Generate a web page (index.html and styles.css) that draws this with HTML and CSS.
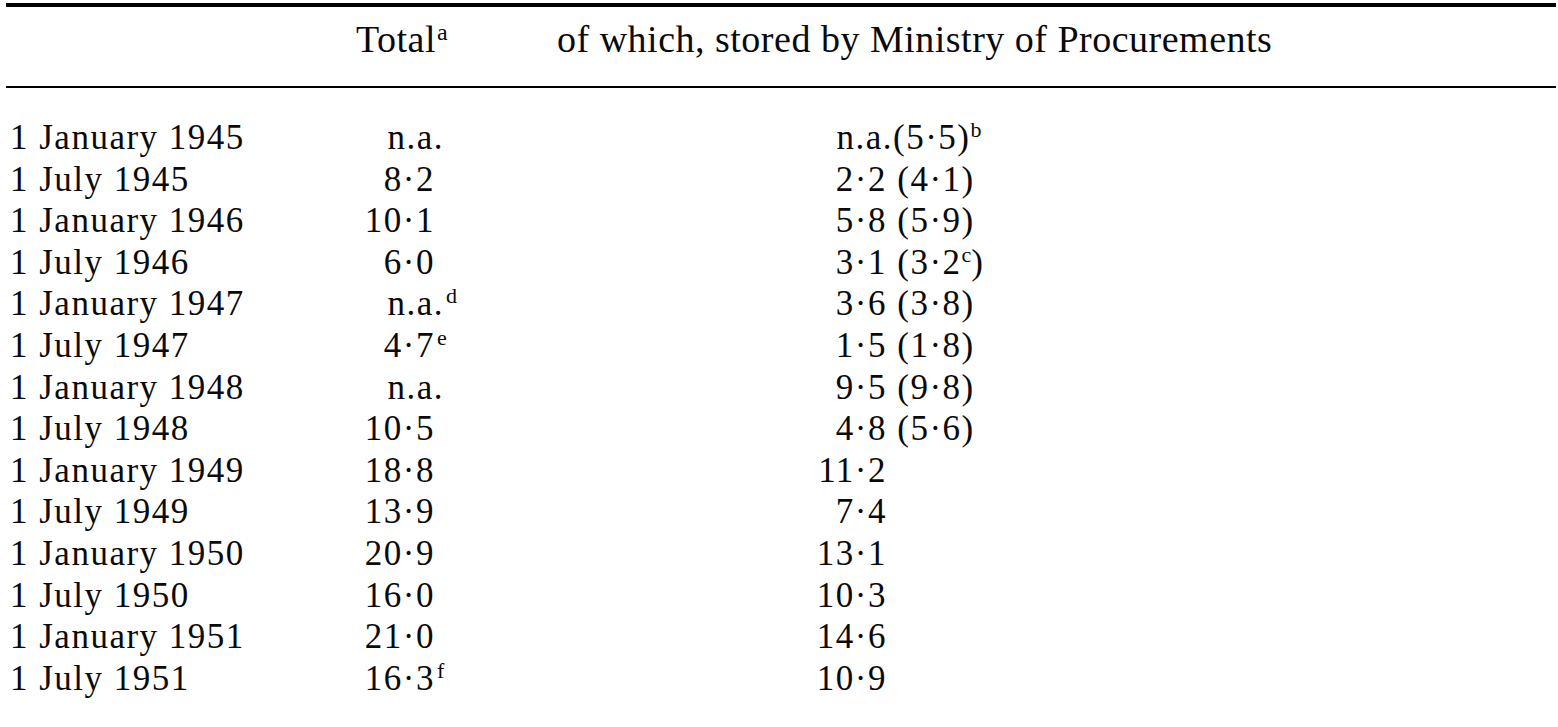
FILE: index.html
```html
<!DOCTYPE html>
<html lang="en">
<head>
<meta charset="utf-8">
<title>Stocks</title>
<link rel="stylesheet" href="styles.css">
</head>
<body>
<div class="table">
  <div class="rule-thick"></div>
  <div class="head">
    <div></div>
    <div class="h-total">Total<sup class="hsup">a</sup></div>
    <div class="h-stored">of which, stored by Ministry of Procurements</div>
  </div>
  <div class="rule-thin"></div>
  <div class="rows">
    <div class="row"><div class="date">1 January 1945</div><div class="tot"><span class="na">n.a.</span></div><div class="sto"><span class="na2">n.a.</span></div><div class="paren after-na">(5·5)<sup class="sup">b</sup></div></div>
    <div class="row"><div class="date">1 July 1945</div><div class="tot">8·2</div><div class="sto">2·2</div><div class="paren"> (4·1)</div></div>
    <div class="row"><div class="date">1 January 1946</div><div class="tot">10·1</div><div class="sto">5·8</div><div class="paren"> (5·9)</div></div>
    <div class="row"><div class="date">1 July 1946</div><div class="tot">6·0</div><div class="sto">3·1</div><div class="paren"> (3·2<sup class="sup">c</sup>)</div></div>
    <div class="row"><div class="date">1 January 1947</div><div class="tot"><span class="na">n.a.</span><span class="fn">d</span></div><div class="sto">3·6</div><div class="paren"> (3·8)</div></div>
    <div class="row"><div class="date">1 July 1947</div><div class="tot">4·7<span class="fn">e</span></div><div class="sto">1·5</div><div class="paren"> (1·8)</div></div>
    <div class="row"><div class="date">1 January 1948</div><div class="tot"><span class="na">n.a.</span></div><div class="sto">9·5</div><div class="paren"> (9·8)</div></div>
    <div class="row"><div class="date">1 July 1948</div><div class="tot">10·5</div><div class="sto">4·8</div><div class="paren"> (5·6)</div></div>
    <div class="row"><div class="date">1 January 1949</div><div class="tot">18·8</div><div class="sto">11·2</div><div class="paren"></div></div>
    <div class="row"><div class="date">1 July 1949</div><div class="tot">13·9</div><div class="sto">7·4</div><div class="paren"></div></div>
    <div class="row"><div class="date">1 January 1950</div><div class="tot">20·9</div><div class="sto">13·1</div><div class="paren"></div></div>
    <div class="row"><div class="date">1 July 1950</div><div class="tot">16·0</div><div class="sto">10·3</div><div class="paren"></div></div>
    <div class="row"><div class="date">1 January 1951</div><div class="tot">21·0</div><div class="sto">14·6</div><div class="paren"></div></div>
    <div class="row"><div class="date">1 July 1951</div><div class="tot">16·3<span class="fn">f</span></div><div class="sto">10·9</div><div class="paren"></div></div>
  </div>
</div>
</body>
</html>
```

FILE: styles.css
```css
html, body {
  margin: 0;
  padding: 0;
  background: #ffffff;
}

body {
  color: #0a0a0a;
  font-family: "Liberation Serif", "Times New Roman", serif;
}

.table {
  margin-left: 6px;
  width: 1550px;
  padding-top: 3px;
}

.rule-thick {
  height: 4px;
  background: #000000;
}

.head {
  display: grid;
  grid-template-columns: 350px 201px 1fr;
  font-size: 38px;
  line-height: 42px;
  letter-spacing: 0.5px;
  padding-top: 11px;
  height: 68px;
}

.hsup {
  font-size: 24px;
  line-height: 0;
  vertical-align: 12px;
  margin-left: 1px;
  letter-spacing: 0;
}

.rule-thin {
  height: 2px;
  background: #000000;
}

.rows {
  padding-top: 29px;
  padding-left: 4px;
}

.row {
  display: grid;
  grid-template-columns: 322px 103px 452px 1fr;
  font-size: 35px;
  line-height: 41.6px;
  letter-spacing: 1.5px;
  white-space: pre;
}

.tot,
.sto {
  text-align: right;
}

.na {
  margin-right: -9px;
}

.na2 {
  margin-right: -6px;
}

.after-na {
  padding-left: 6px;
}

.fn {
  display: inline-block;
  width: 0;
  text-align: left;
  font-size: 22px;
  line-height: 1;
  letter-spacing: 0;
  vertical-align: 12px;
  margin-left: 2px;
  margin-right: -2px;
}

.na + .fn {
  margin-left: 11px;
  margin-right: -11px;
}

.sup {
  font-size: 22px;
  line-height: 0;
  letter-spacing: 0;
  vertical-align: 12px;
}
```
